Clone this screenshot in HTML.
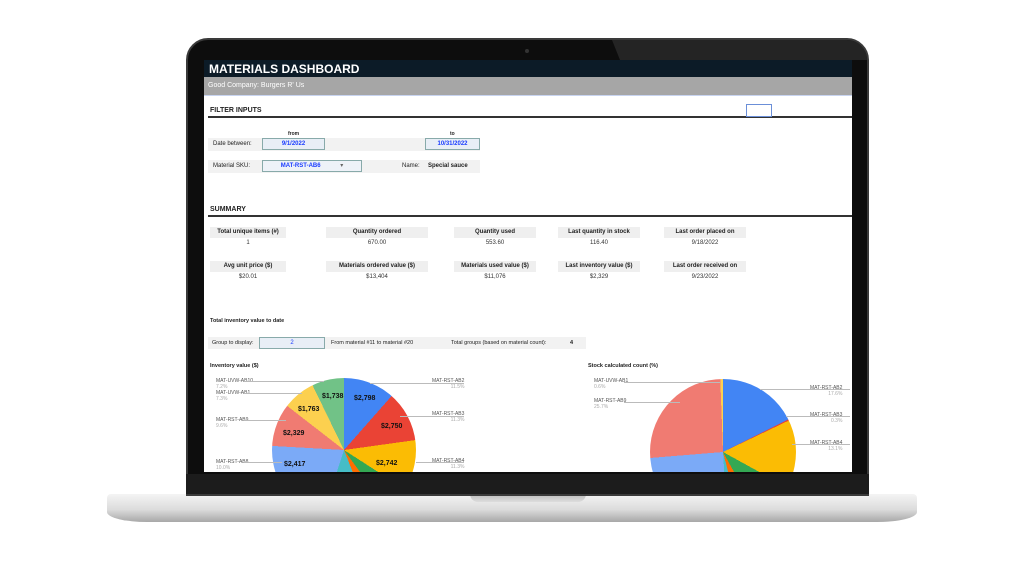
<!DOCTYPE html>
<html><head><style>
*{margin:0;padding:0;box-sizing:border-box}
body{width:1024px;height:565px;background:#fff;position:relative;overflow:hidden;font-family:"Liberation Sans",Arial,sans-serif}
.a{position:absolute}
.bezel{left:186px;top:38px;width:683px;height:458px;background:#0d0d0d;border-radius:22px 22px 0 0;border:2px solid #3a3a3a;overflow:hidden}
.screen{left:204px;top:60px;width:648px;height:412px;background:#fff;overflow:hidden}
.t{position:absolute;font-size:6px;color:#222;white-space:nowrap}
.b{font-weight:bold}
.hb{position:absolute;background:#efefef;height:11px;font-size:6px;font-weight:bold;text-align:center;line-height:11px;color:#222}
.v{position:absolute;font-size:6px;text-align:center;color:#333}
.inp{position:absolute;border:1px solid #8aa;background:#e8eef6;font-size:6px;color:#1a3cff;font-weight:bold;text-align:center;line-height:10px;height:12px}
.lbl{position:absolute;font-size:5px;color:#555;line-height:6px}
.lbl i{font-style:normal;color:#aaa;display:block}
.ln{position:absolute;height:1px;background:#bbb}
.pl{position:absolute;font-size:7px;font-weight:bold;color:#111}
</style></head><body>
<div class="a" style="left:107px;top:494px;width:810px;height:28px;background:linear-gradient(#f4f4f4,#dcdcdc 55%,#a8a8a8);border-radius:4px 4px 40px 40px/4px 4px 10px 10px"></div>
<div class="a" style="left:470px;top:494px;width:116px;height:8px;background:linear-gradient(#bbb,#ddd);border-radius:0 0 8px 8px"></div>
<div class="a bezel"><div class="a" style="left:424px;top:0;width:300px;height:20px;background:#242424;clip-path:polygon(0 0,100% 0,100% 100%,8px 100%)"></div></div>
<div class="a" style="left:186px;top:474px;width:683px;height:20px;background:#1c1c1c"></div>
<div class="a" style="left:525px;top:49px;width:4px;height:4px;border-radius:50%;background:#333"></div>
<div class="a screen">
 <div class="a" style="left:0;top:0;width:648px;height:17px;background:#0c1b27"></div>
 <div class="t b" style="left:5px;top:2px;font-size:12px;color:#fff">MATERIALS DASHBOARD</div>
 <div class="a" style="left:0;top:17px;width:648px;height:18px;background:#a6a6a6"></div>
 <div class="t" style="left:4px;top:22px;color:#fff;font-size:7px">Good Company: Burgers R' Us</div>
 <div class="a" style="left:0;top:35px;width:648px;height:1px;background:#c8d4f0"></div>
 <div class="t b" style="left:6px;top:47px;font-size:7px">FILTER INPUTS</div>
 <div class="a" style="left:4px;top:56px;width:644px;height:1.5px;background:#333"></div>
 <div class="a" style="left:542px;top:44px;width:26px;height:13px;border:1px solid #6b8fd8"></div>
 <div class="t b" style="left:84px;top:71px;font-size:5px">from</div>
 <div class="t b" style="left:246px;top:71px;font-size:5px">to</div>
 <div class="a" style="left:4px;top:78px;width:272px;height:13px;background:#f2f2f2"></div>
 <div class="t" style="left:9px;top:81px">Date between:</div>
 <div class="inp" style="left:58px;top:78px;width:63px">9/1/2022</div>
 <div class="inp" style="left:221px;top:78px;width:55px">10/31/2022</div>
 <div class="a" style="left:4px;top:100px;width:272px;height:13px;background:#f2f2f2"></div>
 <div class="t" style="left:9px;top:103px">Material SKU:</div>
 <div class="inp" style="left:58px;top:100px;width:100px;background:#eef2f8">MAT-RST-AB6 <span style="color:#666;font-weight:normal;margin-left:18px">▾</span></div>
 <div class="t" style="left:198px;top:103px">Name:</div>
 <div class="t b" style="left:224px;top:103px">Special sauce</div>
 <div class="t b" style="left:6px;top:146px;font-size:7px">SUMMARY</div>
 <div class="a" style="left:4px;top:155px;width:644px;height:1.5px;background:#333"></div>

 <div class="hb" style="left:6px;top:167px;width:76px">Total unique items (#)</div>
 <div class="hb" style="left:122px;top:167px;width:102px">Quantity ordered</div>
 <div class="hb" style="left:250px;top:167px;width:82px">Quantity used</div>
 <div class="hb" style="left:354px;top:167px;width:82px">Last quantity in stock</div>
 <div class="hb" style="left:460px;top:167px;width:82px">Last order placed on</div>
 <div class="v" style="left:6px;top:180px;width:76px">1</div>
 <div class="v" style="left:122px;top:180px;width:102px">670.00</div>
 <div class="v" style="left:250px;top:180px;width:82px">553.60</div>
 <div class="v" style="left:354px;top:180px;width:82px">116.40</div>
 <div class="v" style="left:460px;top:180px;width:82px">9/18/2022</div>
 <div class="hb" style="left:6px;top:201px;width:76px">Avg unit price ($)</div>
 <div class="hb" style="left:122px;top:201px;width:102px">Materials ordered value ($)</div>
 <div class="hb" style="left:250px;top:201px;width:82px">Materials used value ($)</div>
 <div class="hb" style="left:354px;top:201px;width:82px">Last inventory value ($)</div>
 <div class="hb" style="left:460px;top:201px;width:82px">Last order received on</div>
 <div class="v" style="left:6px;top:214px;width:76px">$20.01</div>
 <div class="v" style="left:122px;top:214px;width:102px">$13,404</div>
 <div class="v" style="left:250px;top:214px;width:82px">$11,076</div>
 <div class="v" style="left:354px;top:214px;width:82px">$2,329</div>
 <div class="v" style="left:460px;top:214px;width:82px">9/23/2022</div>

 <div class="t b" style="left:6px;top:258px;font-size:5.5px">Total inventory value to date</div>
 <div class="a" style="left:4px;top:277px;width:378px;height:12px;background:#f2f2f2"></div>
 <div class="t" style="left:8px;top:280px;font-size:5.5px">Group to display:</div>
 <div class="inp" style="left:55px;top:277px;width:66px;font-weight:normal">2</div>
 <div class="t" style="left:127px;top:280px;font-size:5.5px">From material #11 to material #20</div>
 <div class="t" style="left:247px;top:280px;font-size:5.5px">Total groups (based on material count):</div>
 <div class="t b" style="left:366px;top:280px;font-size:5.5px">4</div>

 <div class="t b" style="left:6px;top:303px;font-size:5.5px">Inventory value ($)</div>
 <div class="t b" style="left:384px;top:303px;font-size:5.5px">Stock calculated count (%)</div>

 <div class="a" style="left:68px;top:318px;width:144px;height:144px;border-radius:50%;background:conic-gradient(#4285f4 0 11.5%,#ea4335 0 22.8%,#fbbc04 0 34.1%,#34a853 0 40%,#ff6d01 0 44%,#46bdc6 0 55%,#7baaf7 0 75.9%,#f07b72 0 85.5%,#fcd04f 0 92.8%,#71c287 0 100%)"></div>
 <div class="pl" style="left:150px;top:335px">$2,798</div>
 <div class="pl" style="left:177px;top:363px">$2,750</div>
 <div class="pl" style="left:172px;top:400px">$2,742</div>
 <div class="pl" style="left:80px;top:401px">$2,417</div>
 <div class="pl" style="left:79px;top:370px">$2,329</div>
 <div class="pl" style="left:94px;top:346px">$1,763</div>
 <div class="pl" style="left:118px;top:333px">$1,738</div>
 <div class="lbl" style="left:12px;top:318px">MAT-UVW-AB10<i>7.2%</i></div>
 <div class="lbl" style="left:12px;top:330px">MAT-UVW-AB1<i>7.3%</i></div>
 <div class="lbl" style="left:12px;top:357px">MAT-RST-AB9<i>9.6%</i></div>
 <div class="lbl" style="left:12px;top:399px">MAT-RST-AB8<i>10.0%</i></div>
 <div class="lbl" style="left:228px;top:318px;text-align:right">MAT-RST-AB2<i>11.5%</i></div>
 <div class="lbl" style="left:228px;top:351px;text-align:right">MAT-RST-AB3<i>11.3%</i></div>
 <div class="lbl" style="left:228px;top:398px;text-align:right">MAT-RST-AB4<i>11.3%</i></div>
 <div class="ln" style="left:40px;top:321px;width:80px"></div>
 <div class="ln" style="left:40px;top:333px;width:58px"></div>
 <div class="ln" style="left:40px;top:360px;width:42px"></div>
 <div class="ln" style="left:40px;top:402px;width:38px"></div>
 <div class="ln" style="left:166px;top:323px;width:94px"></div>
 <div class="ln" style="left:196px;top:356px;width:64px"></div>
 <div class="ln" style="left:212px;top:402px;width:48px"></div>

 <div class="a" style="left:446px;top:319px;width:146px;height:146px;border-radius:50%;background:conic-gradient(#4285f4 0 17.6%,#ea4335 0 17.9%,#fbbc04 0 33%,#34a853 0 42%,#ff6d01 0 46%,#46bdc6 0 49%,#7baaf7 0 73.7%,#f07b72 0 99.4%,#fcd04f 0 100%)"></div>
 <div class="lbl" style="left:390px;top:318px">MAT-UVW-AB1<i>0.6%</i></div>
 <div class="lbl" style="left:390px;top:338px">MAT-RST-AB9<i>25.7%</i></div>
 <div class="lbl" style="left:606px;top:325px;text-align:right">MAT-RST-AB2<i>17.6%</i></div>
 <div class="lbl" style="left:606px;top:352px;text-align:right">MAT-RST-AB3<i>0.3%</i></div>
 <div class="lbl" style="left:606px;top:380px;text-align:right">MAT-RST-AB4<i>13.1%</i></div>
 <div class="ln" style="left:420px;top:322px;width:96px"></div>
 <div class="ln" style="left:420px;top:342px;width:56px"></div>
 <div class="ln" style="left:556px;top:329px;width:90px"></div>
 <div class="ln" style="left:582px;top:356px;width:64px"></div>
 <div class="ln" style="left:588px;top:384px;width:58px"></div>
</div>
</body></html>
